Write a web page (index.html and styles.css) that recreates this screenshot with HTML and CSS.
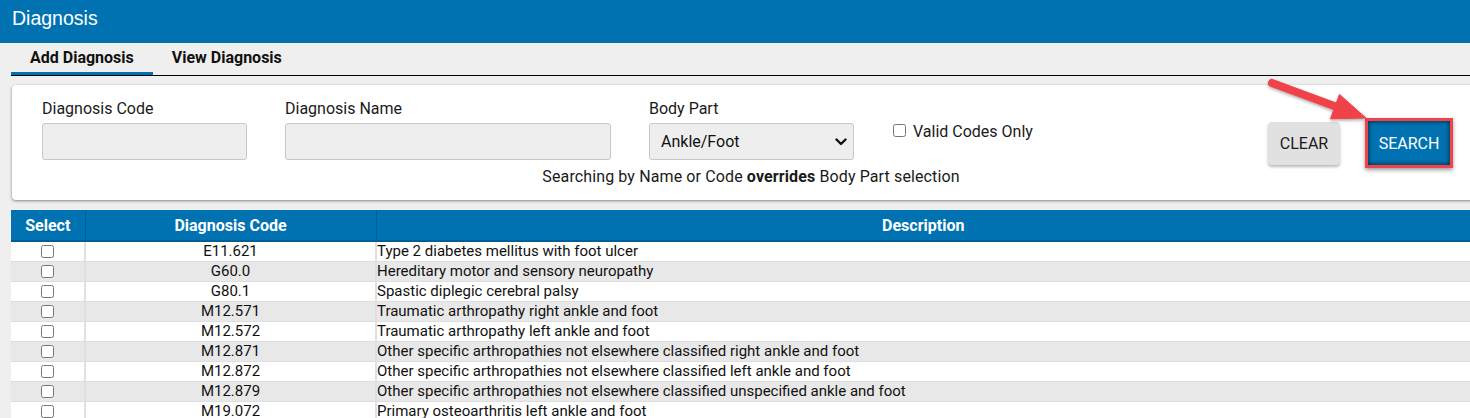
FILE: index.html
```html
<!DOCTYPE html>
<html>
<head>
<meta charset="utf-8">
<link rel="stylesheet" href="styles.css">
</head>
<body>
<div class="page">
  <div class="topbar">Diagnosis</div>
  <div class="tabs">
    <div class="tab active">Add Diagnosis</div>
    <div class="tab">View Diagnosis</div>
  </div>

  <div class="card">
    <div class="fields">
      <div class="field">
        <div class="label">Diagnosis Code</div>
        <input class="input w-code" type="text">
      </div>
      <div class="field">
        <div class="label">Diagnosis Name</div>
        <input class="input w-name" type="text">
      </div>
      <div class="field">
        <div class="label">Body Part</div>
        <div class="select-wrap">
          <select class="select"><option>Ankle/Foot</option></select>
          <svg class="chev" width="12" height="8" viewBox="0 0 12 8"><path d="M1.5 1.5 L6 6 L10.5 1.5" fill="none" stroke="#111" stroke-width="2.4" stroke-linecap="round" stroke-linejoin="round"/></svg>
        </div>
      </div>
      <label class="valid"><input type="checkbox" class="cb"><span>Valid Codes Only</span></label>
    </div>
    <div class="helper">Searching by Name or Code <b>overrides</b> Body Part selection</div>
    <div class="buttons">
      <button class="btn clear">CLEAR</button>
      <button class="btn search">SEARCH</button>
    </div>
  </div>

  <svg class="arrow" width="130" height="70" viewBox="0 0 130 70">
    <defs>
      <filter id="sh" x="-20%" y="-20%" width="140%" height="160%">
        <feDropShadow dx="0" dy="1.5" stdDeviation="1.5" flood-color="#000" flood-opacity="0.35"/>
      </filter>
    </defs>
    <g filter="url(#sh)" fill="#f0434a" stroke="#f0434a">
      <line x1="17" y1="13" x2="82" y2="37" stroke-width="8" stroke-linecap="round"/>
      <polygon points="111,48 84.5,24.4 75.5,48.8" stroke-width="1" stroke-linejoin="round"/>
    </g>
  </svg>

  <table class="grid">
    <colgroup><col class="c1"><col class="c2"><col></colgroup>
    <thead>
      <tr><th>Select</th><th>Diagnosis Code</th><th>Description</th></tr>
    </thead>
    <tbody>
      <tr><td class="sel"><input type="checkbox" class="cb"></td><td class="code">E11.621</td><td>Type 2 diabetes mellitus with foot ulcer</td></tr>
      <tr><td class="sel"><input type="checkbox" class="cb"></td><td class="code">G60.0</td><td>Hereditary motor and sensory neuropathy</td></tr>
      <tr><td class="sel"><input type="checkbox" class="cb"></td><td class="code">G80.1</td><td>Spastic diplegic cerebral palsy</td></tr>
      <tr><td class="sel"><input type="checkbox" class="cb"></td><td class="code">M12.571</td><td>Traumatic arthropathy right ankle and foot</td></tr>
      <tr><td class="sel"><input type="checkbox" class="cb"></td><td class="code">M12.572</td><td>Traumatic arthropathy left ankle and foot</td></tr>
      <tr><td class="sel"><input type="checkbox" class="cb"></td><td class="code">M12.871</td><td>Other specific arthropathies not elsewhere classified right ankle and foot</td></tr>
      <tr><td class="sel"><input type="checkbox" class="cb"></td><td class="code">M12.872</td><td>Other specific arthropathies not elsewhere classified left ankle and foot</td></tr>
      <tr><td class="sel"><input type="checkbox" class="cb"></td><td class="code">M12.879</td><td>Other specific arthropathies not elsewhere classified unspecified ankle and foot</td></tr>
      <tr><td class="sel"><input type="checkbox" class="cb"></td><td class="code">M19.072</td><td>Primary osteoarthritis left ankle and foot</td></tr>
    </tbody>
  </table>
</div>
</body>
</html>
```

FILE: styles.css
```css
html, body {
  margin: 0;
  padding: 0;
  overflow: hidden;
}
body {
  background: #efefef;
  font-family: Roboto, "Liberation Sans", Arial, sans-serif;
  color: #1a1a1a;
}
.page {
  width: 1490px;
  position: relative;
}
.topbar {
  height: 43px;
  background: #0072b1;
  color: #fff;
  font-family: "Liberation Sans", Arial, sans-serif;
  font-size: 19.5px;
  line-height: 37px;
  padding-left: 12px;
  box-sizing: border-box;
}
.tabs {
  display: flex;
  margin-left: 11px;
  border-bottom: 1px solid #000;
  height: 33px;
  box-sizing: border-box;
}
.tab {
  padding: 0 19px;
  font-weight: 700;
  font-size: 16px;
  line-height: 30px;
  height: 32px;
  box-sizing: border-box;
  color: #111;
  border-bottom: 3px solid transparent;
}
.tab.active {
  border-bottom-color: #0072b1;
}
.card {
  margin: 9px 0 0 12px;
  background: #fff;
  border-radius: 4px;
  box-shadow: 0 1px 3px rgba(0, 0, 0, 0.45);
  padding: 15px 30px 14px 30px;
  display: grid;
  grid-template-columns: 1fr auto;
  grid-template-rows: auto auto;
}
.fields {
  grid-column: 1;
  grid-row: 1;
  display: flex;
  align-items: flex-start;
  gap: 38px;
}
.field {
  display: flex;
  flex-direction: column;
}
.label {
  font-size: 16px;
  line-height: 18px;
  margin-bottom: 5px;
  color: #1a1a1a;
}
.input {
  height: 37px;
  box-sizing: border-box;
  background: #eeeeee;
  border: 1px solid #c8c8c8;
  border-radius: 3px;
  margin: 0;
  padding: 0 10px;
  font-family: inherit;
  font-size: 16px;
}
.w-code { width: 205px; }
.w-name { width: 326px; }
.select-wrap {
  position: relative;
  width: 205px;
}
.select {
  -webkit-appearance: none;
  appearance: none;
  width: 205px;
  height: 37px;
  box-sizing: border-box;
  background: #eeeeee;
  border: 1px solid #c8c8c8;
  border-radius: 3px;
  margin: 0;
  padding: 0 0 0 11px;
  font-family: inherit;
  font-size: 16px;
  color: #111;
}
.chev {
  position: absolute;
  right: 7px;
  top: 15px;
}
.valid {
  display: flex;
  align-items: flex-start;
  margin-top: 23px;
  margin-left: 1px;
  font-size: 16px;
  line-height: 18px;
  color: #1a1a1a;
}
.cb {
  width: 13px;
  height: 13px;
  margin: 1px 7px 0 0;
}
.helper {
  grid-column: 1 / -1;
  grid-row: 2;
  text-align: center;
  font-size: 16px;
  letter-spacing: 0.12px;
  line-height: 18px;
  margin-top: 8px;
  color: #1a1a1a;
}
.helper b {
  font-weight: 700;
}
.buttons {
  grid-column: 2;
  grid-row: 1 / 3;
  align-self: center;
  display: flex;
  align-items: center;
  gap: 25px;
  padding-right: 7px;
  margin-top: 0;
}
.btn {
  font-family: Roboto, "Liberation Sans", Arial, sans-serif;
  font-size: 16px;
  margin: 0;
  cursor: pointer;
}
.clear {
  width: 72px;
  height: 43px;
  background: #e1e1e1;
  color: #1a1a1a;
  border: none;
  border-radius: 4px;
  box-shadow: 0 2px 3px rgba(0, 0, 0, 0.28);
  padding: 0;
}
.search {
  width: 88px;
  height: 50px;
  background: #0072b1;
  color: #fff;
  border: 3px solid #f0434a;
  border-radius: 0;
  padding: 0;
  box-shadow: inset 0 0 4px 1px rgba(0, 0, 0, 0.55), 0 2px 4px rgba(0, 0, 0, 0.4);
}
.arrow {
  position: absolute;
  left: 1255px;
  top: 70px;
}
.grid {
  margin: 10px 0 0 11px;
  width: 1459px;
  table-layout: fixed;
  border-collapse: collapse;
  font-size: 15px;
}
.c1 { width: 74px; }
.c2 { width: 291px; }
.grid th {
  background: #0072b1;
  color: #fff;
  font-weight: 700;
  font-size: 16px;
  height: 30px;
  padding: 0;
  border-bottom: 2px solid #005e93;
  border-left: 1px solid #005e93;
}
.grid th:first-child {
  border-left: none;
}
.grid td {
  height: 19px;
  padding: 0;
  line-height: 19px;
  border-top: 1px solid #dedede;
  border-left: 2px solid rgba(0, 0, 0, 0.06);
  color: #111;
  white-space: nowrap;
  overflow: hidden;
}
.grid td:first-child {
  border-left: none;
}
.grid tbody tr:nth-child(odd) td {
  background: #ffffff;
}
.grid tbody tr:nth-child(even) td {
  background: #e8e8e8;
}
.grid tbody tr:first-child td {
  border-top: none;
}
.sel {
  text-align: center;
}
.sel .cb {
  margin: 3px 0 0 0;
  vertical-align: top;
}
.code {
  text-align: center;
}
```
